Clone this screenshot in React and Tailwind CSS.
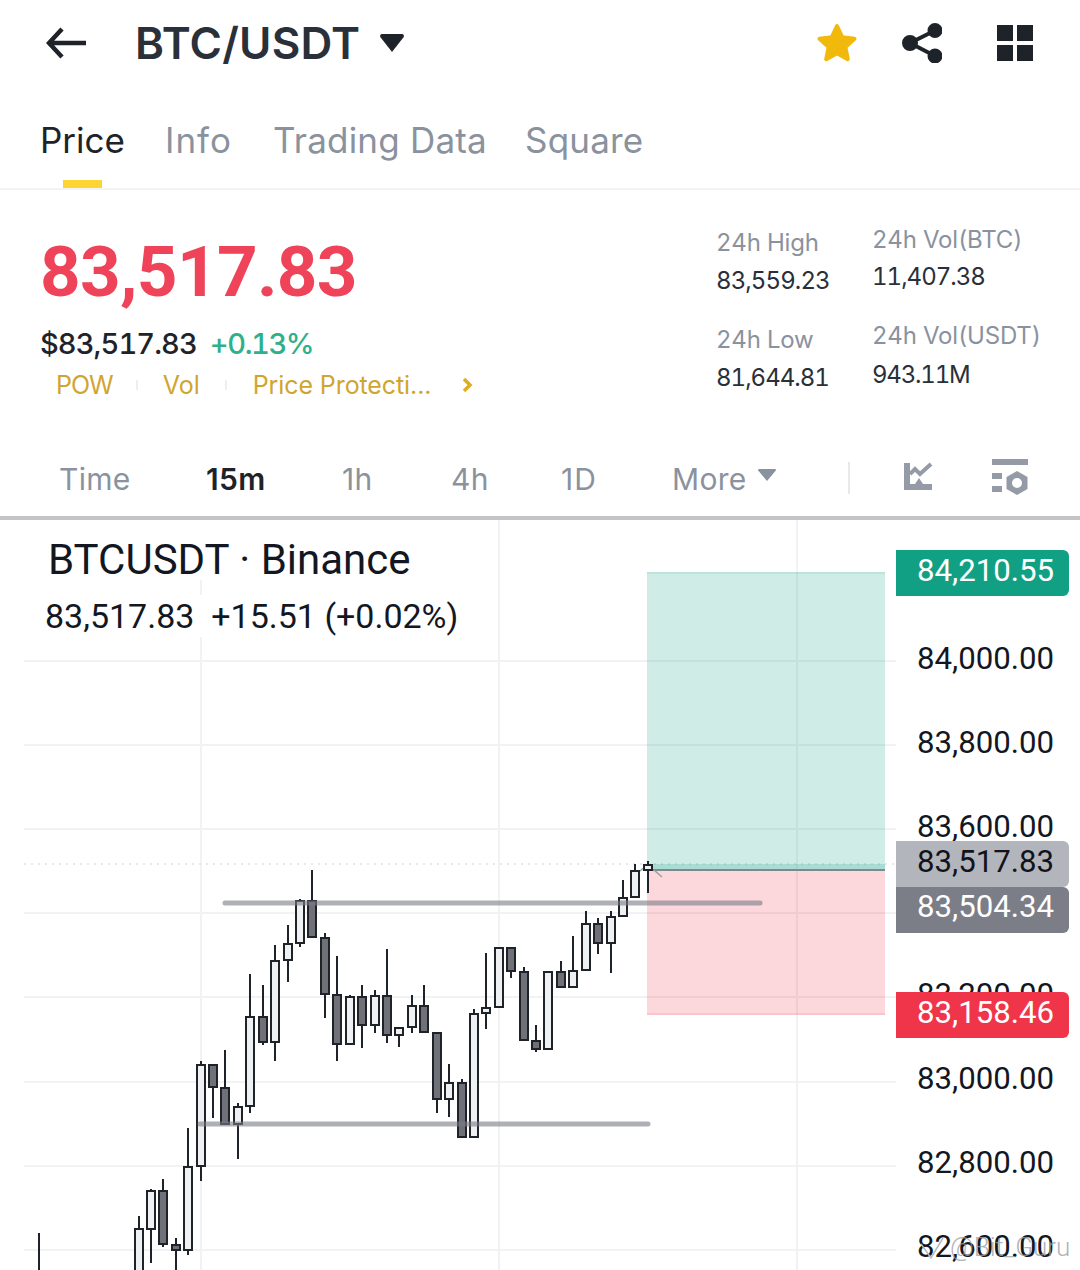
import React from "react";

const uiFont = "font-['Inter','Noto_Sans',sans-serif]";

// x, wick top, body top, body bottom, wick bottom, dark
const candles = [
    [139, 1216, 1229, 1290, 1290, 0],
    [151, 1189, 1191, 1229, 1263, 0],
    [163, 1179, 1191, 1244, 1247, 1],
    [176, 1238, 1245, 1250, 1290, 1],
    [188, 1128, 1167, 1250, 1255, 0],
    [201, 1061, 1065, 1166, 1181, 0],
    [213, 1065, 1065, 1087, 1118, 1],
    [225, 1050, 1088, 1124, 1124, 1],
    [238, 1103, 1107, 1124, 1159, 0],
    [250, 974, 1017, 1106, 1113, 0],
    [263, 985, 1017, 1042, 1045, 1],
    [275, 945, 961, 1042, 1061, 0],
    [288, 925, 944, 960, 982, 0],
    [300, 899, 901, 943, 947, 0],
    [312, 870, 901, 937, 937, 1],
    [325, 933, 938, 994, 1018, 1],
    [337, 956, 995, 1044, 1061, 1],
    [350, 995, 997, 1044, 1044, 0],
    [362, 985, 997, 1025, 1048, 1],
    [375, 990, 996, 1025, 1033, 0],
    [387, 949, 996, 1035, 1043, 1],
    [399, 1027, 1028, 1035, 1047, 0],
    [412, 995, 1006, 1027, 1033, 0],
    [424, 985, 1006, 1032, 1032, 1],
    [437, 1033, 1033, 1099, 1113, 1],
    [449, 1064, 1083, 1099, 1117, 0],
    [462, 1079, 1083, 1137, 1137, 1],
    [474, 1009, 1014, 1137, 1137, 0],
    [486, 953, 1008, 1013, 1029, 0],
    [499, 948, 948, 1007, 1007, 0],
    [511, 948, 948, 971, 978, 1],
    [524, 967, 972, 1040, 1040, 1],
    [536, 1025, 1041, 1049, 1052, 1],
    [548, 972, 972, 1049, 1049, 0],
    [561, 961, 972, 987, 987, 1],
    [573, 936, 971, 987, 987, 0],
    [586, 911, 924, 970, 970, 0],
    [598, 918, 924, 943, 954, 1],
    [611, 911, 917, 943, 973, 0],
    [623, 880, 898, 916, 916, 0],
    [635, 864, 871, 897, 897, 0],
    [648, 861, 865, 870, 893, 0],
];

const gridY = [661, 745, 829, 913, 997, 1082, 1166, 1250];
const gridX = [201, 499, 797];

const axisLabels = [
    ["84,000.00", "top-[118px]"],
    ["83,800.00", "top-[202px]"],
    ["83,600.00", "top-[286px]"],
    ["83,200.00", "top-[454px]"],
    ["83,000.00", "top-[538px]"],
    ["82,800.00", "top-[622px]"],
    ["82,600.00", "top-[706px]"],
];

const priceTags = [
    ["84,210.55", "top-[30px] leading-[42px] bg-[#12a085] text-white"],
    ["83,517.83", "top-[321px] leading-[42px] bg-[#b3b5bc] text-[#111318]"],
    ["83,504.34", "top-[367px] leading-[40px] bg-[#7b7d87] text-white"],
    ["83,158.46", "top-[472px] leading-[42px] bg-[#f0354a] text-white"],
];

function Chart() {
    return (
        <svg className="absolute inset-0" width="1080" height="750" viewBox="0 520 1080 750">
            {gridY.map((y) => (
                <line key={y} x1="24" x2="896" y1={y} y2={y} stroke="#f1f2f3" strokeWidth="2" />
            ))}
            {gridX.map((x) => (
                <line key={x} x1={x} x2={x} y1="520" y2="1270" stroke="#f1f2f3" strokeWidth="2" />
            ))}
            <line x1="24" x2="896" y1="864" y2="864" stroke="#dfe1e4" strokeWidth="1.5" strokeDasharray="2 5" />

            <rect x="647" y="572" width="238" height="298" fill="#12a085" fillOpacity="0.2" />
            <rect x="647" y="572" width="238" height="2" fill="#12a085" fillOpacity="0.1" />
            <rect x="647" y="864" width="238" height="5" fill="#12a085" fillOpacity="0.2" />
            <rect x="647" y="870" width="238" height="145" fill="#f0354a" fillOpacity="0.2" />
            <rect x="647" y="1013" width="238" height="2" fill="#f0354a" fillOpacity="0.1" />
            <line x1="647" x2="885" y1="870" y2="870" stroke="#7b8a8c" strokeWidth="2" />

            <path d="M640 871L646 866M654 870L662 877" stroke="#9a9ca3" strokeWidth="1.5" fill="none" />

            <line x1="39" x2="39" y1="1233" y2="1270" stroke="#1e2329" strokeWidth="2" />
            {candles.map(([x, high, top, bottom, low, dark]) => (
                <g key={x}>
                    <line x1={x} x2={x} y1={high} y2={low} stroke="#1e2329" strokeWidth="2" />
                    <rect
                        x={x - 4}
                        y={top}
                        width="8"
                        height={bottom - top}
                        fill={dark ? "#6f7078" : "#eff0f2"}
                        stroke="#1e2329"
                        strokeWidth="2"
                    />
                </g>
            ))}

            <line x1="225" x2="760" y1="903" y2="903" stroke="#787b86" strokeOpacity="0.6" strokeWidth="5" strokeLinecap="round" />
            <line x1="200" x2="648" y1="1124" y2="1124" stroke="#787b86" strokeOpacity="0.6" strokeWidth="5" strokeLinecap="round" />
        </svg>
    );
}

function App() {
    return (
        <div className={`w-[1080px] h-[1270px] bg-white overflow-hidden flex flex-col ${uiFont}`}>
            <header className="h-[85px] shrink-0 flex items-center pl-[46px] pr-[47px]">
                <svg width="40" height="32" viewBox="0 0 40 32" fill="none" stroke="#1e2329" strokeWidth="4.5">
                    <path d="M40 16H4M16 2L3 16l13 14" />
                </svg>
                <h1 className="ml-[49px] text-[44px] leading-none font-semibold tracking-[0.2px] text-[#2a303a]">BTC/USDT</h1>
                <svg className="ml-[20px]" width="24" height="18" viewBox="0 0 24 18" fill="#1e2329">
                    <path d="M2 0h20a2 2 0 0 1 1.5 3.2L12 18 .5 3.2A2 2 0 0 1 2 0z" />
                </svg>
                <svg className="ml-auto" width="42" height="40" viewBox="0 0 42 40" fill="#f0b90b" stroke="#f0b90b" strokeWidth="4" strokeLinejoin="round">
                    <path d="M21 3l5.2 11.2 12.3 1.5-9.1 8.4 2.4 12.1L21 30.2 10.2 36.2l2.4-12.1-9.1-8.4 12.3-1.5z" />
                </svg>
                <svg className="ml-[44px]" width="40" height="40" viewBox="0 0 40 40" fill="#1e2329" stroke="#1e2329" strokeWidth="4">
                    <circle cx="33" cy="7.5" r="5.5" />
                    <circle cx="8" cy="20" r="6" />
                    <circle cx="33" cy="33" r="5.500" />
                    <path d="M8 20L33 7.5M8 20l25 13" fill="none" />
                </svg>
                <div className="ml-[55px] grid grid-cols-2 gap-[4px]">
                    <div className="w-[16px] h-[16px] bg-[#1e2329]" />
                    <div className="w-[16px] h-[16px] bg-[#1e2329]" />
                    <div className="w-[16px] h-[16px] bg-[#1e2329]" />
                    <div className="w-[16px] h-[16px] bg-[#1e2329]" />
                </div>
            </header>

            <nav className="h-[105px] shrink-0 border-b-2 border-[#f2f3f4] flex items-start pl-[40px] text-[35px] leading-none text-[#8a929e]">
                <div className="relative w-[125px] h-[103px] pt-[38px] text-[#1e2329]">
                    Price
                    <div className="absolute bottom-0 left-[23px] w-[39px] h-[8px] bg-[#fcd535]" />
                </div>
                <div className="w-[108px] pt-[38px] tracking-[1px]">Info</div>
                <div className="w-[252px] pt-[38px] tracking-[0.2px]">Trading Data</div>
                <div className="pt-[38px] tracking-[0.2px]">Square</div>
            </nav>

            <section className="h-[250px] shrink-0 flex pl-[40px]">
                <div className="w-[676px] shrink-0 pt-[42px]">
                    <div className="font-['Roboto',sans-serif] text-[71px] leading-[80px] font-bold tracking-[-0.7px] text-[#ee4358]">83,517.83</div>
                    <div className="mt-[14px] flex items-center text-[29px] leading-[36px] font-medium tabular-nums">
                        <span className="text-[#1e2329] tracking-[-0.9px]">$83,517.83</span>
                        <span className="ml-[13px] text-[#2fb08c] tracking-[-1.4px]">+0.13%</span>
                    </div>
                    <div className="mt-[7px] pl-[16px] flex items-center text-[25px] leading-[32px] text-[#d0a52f]">
                        <span className="tracking-[-1px]">POW</span>
                        <span className="ml-[23px] w-[2px] h-[10px] bg-[#eeeff1]" />
                        <span className="ml-[25px]">Vol</span>
                        <span className="ml-[25px] w-[2px] h-[10px] bg-[#eeeff1]" />
                        <span className="ml-[26px] tracking-[-0.1px]">Price Protecti...</span>
                        <svg className="ml-[31px]" width="12" height="16" viewBox="0 0 12 16" fill="none" stroke="#e0ae1c" strokeWidth="3.5">
                            <path d="M2 2l6 6-6 6" />
                        </svg>
                    </div>
                </div>
                <div className="w-[156px] shrink-0 pt-[36px] text-[24px] leading-[34px] tabular-nums">
                    <div className="text-[#8a929e] tracking-[-0.2px]">24h High</div>
                    <div className="mt-[4px] text-[#2a303a] tracking-[-0.9px]">83,559.23</div>
                    <div className="mt-[25px] text-[#8a929e] tracking-[-0.2px]">24h Low</div>
                    <div className="mt-[4px] text-[#2a303a] tracking-[-1px]">81,644.81</div>
                </div>
                <div className="pt-[33px] text-[24px] leading-[34px] tabular-nums">
                    <div className="text-[#8a929e] tracking-[-0.2px]">24h Vol(BTC)</div>
                    <div className="mt-[3px] text-[#2a303a] tracking-[-1px]">11,407.38</div>
                    <div className="mt-[25px] text-[#8a929e] tracking-[-0.2px]">24h Vol(USDT)</div>
                    <div className="mt-[5px] text-[#2a303a] tracking-[-1.2px]">943.11M</div>
                </div>
            </section>

            <div className="h-[80px] shrink-0 border-b-4 border-[#c2c4c8] flex items-start pt-[21px] pl-[59px] text-[30px] leading-[36px] tracking-[0.3px] text-[#8a929e]">
                <span className="w-[147px]">Time</span>
                <span className="w-[136px] font-semibold text-[#1e2329]">15m</span>
                <span className="w-[109px]">1h</span>
                <span className="w-[110px]">4h</span>
                <span className="w-[111px] tracking-[1px]">1D</span>
                <span>More</span>
                <svg className="ml-[11px] mt-[8px]" width="18" height="12" viewBox="0 0 18 12" fill="#8a929e">
                    <path d="M1 0h16a1 1 0 0 1 .8 1.6L9 12 .2 1.6A1 1 0 0 1 1 0z" />
                </svg>
                <div className="ml-[72px] mt-[1px] w-[2px] h-[32px] bg-[#e8e9eb]" />
                <svg className="ml-[53px] -mt-[1px]" width="32" height="32" viewBox="0 0 32 32" fill="#949ba6">
                    <path d="M1 3h6v21h22v6H1z" />
                    <path d="M7 14l5-5 5 5 11-10" fill="none" stroke="#949ba6" strokeWidth="4" />
                    <path d="M16 18l4 6h-8z" />
                </svg>
                <svg className="ml-[56px] -mt-[3px]" width="38" height="38" viewBox="0 0 38 38" fill="#949ba6">
                    <rect x="1" y="1" width="36" height="6" />
                    <rect x="1" y="15" width="10" height="6" />
                    <rect x="1" y="28" width="10" height="6" />
                    <path fillRule="evenodd" d="M26 13l10.5 6v12L26 37l-10.500-6V19zm0 7a5 5 0 1 0 0 10 5 5 0 0 0 0-10z" />
                </svg>
            </div>

            <main className="relative flex-1 font-['Roboto',sans-serif] text-[#131722]">
                <Chart />
                <div className="absolute top-0 left-[36px] bg-white px-[12px] text-[42px] leading-[80px] h-[60px]">
                    <span className="block">BTCUSDT · Binance</span>
                </div>
                <div className="absolute top-[75px] left-[36px] bg-white pl-[9px] pr-[4px] text-[34px] leading-[42px] whitespace-pre">
                    83,517.83  +15.51 (+0.02%)
                </div>

                {axisLabels.map(([text, top]) => (
                    <div key={text} className={`absolute left-[896px] w-[173px] h-[46px] pr-[15px] text-right text-[31.2px] leading-[42px] ${top}`}>
                        {text}
                    </div>
                ))}
                {priceTags.map(([text, cls]) => (
                    <div key={text} className={`absolute left-[896px] w-[173px] h-[46px] pr-[15px] text-right text-[31.2px] rounded-r-[6px] ${cls}`}>
                        {text}
                    </div>
                ))}

                {/* photo watermark */}
                <div className="absolute top-[712px] left-[918px] flex items-center text-[26px] leading-[30px] text-[#9a9ea5]/80 font-light">
                    <svg width="30" height="30" viewBox="0 0 30 30" fill="none" stroke="#b5b8bd" strokeWidth="1.5">
                        <path d="M3 12l10 14 12-20" />
                    </svg>
                    <span className="ml-[2px]">@Bit_Guru</span>
                </div>
            </main>
        </div>
    );
}

export default App;
